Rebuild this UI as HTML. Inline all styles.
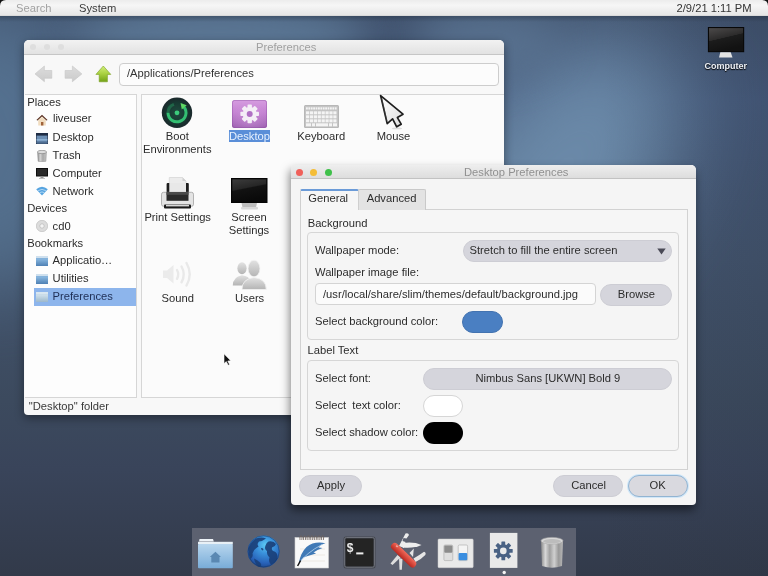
<!DOCTYPE html>
<html><head><meta charset="utf-8">
<style>
*{margin:0;padding:0;box-sizing:border-box}
html,body{width:768px;height:576px;overflow:hidden}
body{font-family:"Liberation Sans",sans-serif;font-size:11.2px;color:#2c2c2c;position:relative;
background:#3b4a5e}
#root{position:absolute;left:0;top:0;width:768px;height:576px;overflow:hidden;filter:blur(0.4px)}
.abs{position:absolute}
.t{position:absolute;white-space:nowrap;line-height:1}
#bg{position:absolute;left:0;top:0;width:768px;height:576px;overflow:hidden;
background:linear-gradient(180deg,#3f506a 0px,#45597a 100px,#42536c 260px,#3c4a5e 400px,#39445a 470px,#323a4a 576px);}
.blob{position:absolute;border-radius:50%}
#menubar{position:absolute;left:0;top:0;width:768px;height:16px;background:linear-gradient(#ececec,#f6f6f6 35%,#e6e6e6);border-bottom:1px solid #dadada}
/* preferences window */
#win{position:absolute;left:24px;top:40px;width:480px;height:375px;background:#f8f8f8;border-radius:5px 5px 4px 4px;overflow:hidden;box-shadow:0 3px 10px rgba(0,0,0,0.4)}
#win .title{position:absolute;left:0;top:0;width:480px;height:15px;background:linear-gradient(#f2f2f2,#e2e2e2);border-bottom:1px solid #c6c6c6}
.gdot{position:absolute;width:6px;height:6px;border-radius:50%;background:#dedede;top:4px}
#addr{position:absolute;left:95px;top:23px;width:380px;height:23px;border:1px solid #cdcdcd;border-radius:4px;background:#fcfcfc}
#side{position:absolute;left:1px;top:54px;width:112px;height:304px;background:#fdfdfd;border-top:1px solid #d6d6d6;border-right:1px solid #d6d6d6;border-bottom:1px solid #d6d6d6}
#main{position:absolute;left:117px;top:54px;width:363px;height:304px;background:#fbfbfb;border-top:1px solid #d6d6d6;border-left:1px solid #d6d6d6;border-bottom:1px solid #d6d6d6}
/* dialog */
#dlg{position:absolute;left:291px;top:165px;width:405px;height:340px;background:#f5f5f5;border-radius:2px 5px 4px 4px;overflow:hidden;box-shadow:-1px 5px 10px rgba(0,0,0,0.5)}
#dlg .title{position:absolute;left:0;top:0;width:405px;height:14px;background:linear-gradient(#eeeeee,#dddddd);border-bottom:1px solid #c2c2c2}
.cdot{position:absolute;width:7px;height:7px;border-radius:50%;top:3.5px}
.btn{position:absolute;background:#d4d4da;border-radius:11px;text-align:center;color:#333}
.frame{position:absolute;border:1px solid #d6d6d6;border-radius:4px}
/* dock */
#dlgc .t{margin-top:-0.8px;margin-left:0.5px}
#sidec .t{margin-left:0.6px}
#dock{position:absolute;left:192px;top:528px;width:384px;height:48px;background:#5c6170}
</style></head>
<body><div id="root">
<div id="bg">
<div class="blob" style="left:390px;top:85px;width:330px;height:190px;background:#7090af;filter:blur(45px);transform:rotate(-52deg);opacity:0.9"></div>
<div class="blob" style="left:-130px;top:0px;width:230px;height:290px;background:#587694;filter:blur(40px);opacity:0.8"></div>
<div class="blob" style="left:70px;top:0px;width:300px;height:80px;background:#5e7b99;filter:blur(22px);opacity:0.9"></div><div class="blob" style="left:410px;top:5px;width:150px;height:70px;background:#5b7593;filter:blur(22px);opacity:0.85"></div><div class="abs" style="left:0;top:16px;width:768px;height:6px;background:linear-gradient(rgba(30,40,55,0.35),rgba(30,40,55,0))"></div>
<div class="abs" style="left:600px;top:0;width:168px;height:576px;background:linear-gradient(90deg,rgba(30,38,52,0),rgba(30,38,52,0.12))"></div>
</div>
<div id="menubar">
<svg class="abs" style="left:0;top:0" width="6" height="6"><path d="M0 0 H6 Q0 0 0 6 Z" fill="#111"/></svg><svg class="abs" style="left:762px;top:0" width="6" height="6"><path d="M6 0 H0 Q6 0 6 6 Z" fill="#111"/></svg>
  <div class="t" style="left:16px;top:2.5px;color:#a2a2a2">Search</div>
  <div class="t" style="left:79px;top:2.5px;color:#3a3a3a">System</div>
  <div class="t" style="left:676.5px;top:2.5px;color:#333">2/9/21 1:11 PM</div>
</div>

<!-- Desktop icon Computer -->
<svg class="abs" style="left:707px;top:26px" width="38" height="32" viewBox="707 26 38 32">
<defs><linearGradient id="dcg" x1="0" y1="0" x2="0.35" y2="1"><stop offset="0" stop-color="#4c4a4a"/><stop offset="0.5" stop-color="#2c2b2b"/><stop offset="0.52" stop-color="#1c1c1c"/><stop offset="1" stop-color="#121212"/></linearGradient></defs>
<rect x="707.9" y="27" width="36.3" height="25.2" fill="#080808"/>
<rect x="709" y="28.1" width="34.1" height="23" fill="url(#dcg)"/>
<path d="M720.3 52.2 L730.7 52.2 L732.5 57.6 L719 57.6 Z" fill="#e2e2e2"/>
</svg>
<div class="t" style="left:704.6px;top:61.5px;font-size:9px;font-weight:bold;color:#eef2f8;text-shadow:0 1px 1px #000,0 0 2px rgba(0,0,0,0.6)">Computer</div>
<div id="win">
  <div class="title">
    <div class="gdot" style="left:5.5px"></div>
    <div class="gdot" style="left:20px"></div>
    <div class="gdot" style="left:34px"></div>
    <div class="t" style="left:232px;top:2px;color:#a0a0a0">Preferences</div>
  </div>
  <div id="addr"><div class="t" style="left:7px;top:4px;color:#333">/Applications/Preferences</div></div>
  <div id="side"></div>
  <div id="main"></div>
  <div class="t" style="left:4.8px;top:361px;color:#3a3a3a">"Desktop" folder</div>
</div>

<svg class="abs" style="left:30px;top:60px" width="85" height="28" viewBox="30 60 85 28">
<defs><linearGradient id="upg" x1="0" y1="0" x2="0" y2="1"><stop offset="0" stop-color="#d2ef7a"/><stop offset="0.5" stop-color="#a8d040"/><stop offset="1" stop-color="#72a216"/></linearGradient>
<linearGradient id="grg" x1="0" y1="0" x2="0" y2="1"><stop offset="0" stop-color="#dcdcdc"/><stop offset="1" stop-color="#cbcbcb"/></linearGradient></defs>
<path d="M35 73.9 L44.4 66 L44.4 70.5 L51.8 70.5 L51.8 78.3 L44.4 78.3 L44.4 81.7 Z" fill="url(#grg)" stroke="#c6c6c6" stroke-width="0.6"/>
<path d="M81.9 73.9 L72.4 66 L72.4 70.5 L65.1 70.5 L65.1 78.3 L72.4 78.3 L72.4 81.7 Z" fill="url(#grg)" stroke="#c6c6c6" stroke-width="0.6"/>
<path d="M103.3 66 L110.8 74.4 L107.4 74.4 L107.4 81.8 L99.2 81.8 L99.2 74.4 L95.9 74.4 Z" fill="url(#upg)" stroke="#78a020" stroke-width="0.6"/>
</svg>
<div id="sidec">
<div class="abs" style="left:34px;top:288px;width:102px;height:17.5px;background:#8db5ec"></div>
<svg width="0" height="0" style="position:absolute"><defs><linearGradient id="fg0" x1="0" y1="0" x2="0" y2="1"><stop offset="0" stop-color="#8fbde4"/><stop offset="1" stop-color="#4e80b4"/></linearGradient><linearGradient id="fg1" x1="0" y1="0" x2="0" y2="1"><stop offset="0" stop-color="#d4e4ee"/><stop offset="1" stop-color="#9cb8cc"/></linearGradient></defs></svg>
<div class="t" style="left:26.6px;top:96.6px;">Places</div>
<svg class="abs" style="left:36px;top:114px" width="12" height="12" viewBox="0 0 12 12"><path d="M6 0.8 L11.6 6 L10.2 6.4 L6 2.6 L1.8 6.4 L0.4 6 Z" fill="#5b3324"/><path d="M2.2 6 L6 2.8 L9.8 6 L9.8 11.5 L2.2 11.5 Z" fill="#f0dcc0"/><rect x="5" y="8" width="2.4" height="3.5" fill="#a0623a"/></svg><div class="t" style="left:52.3px;top:113.3px;">liveuser</div>
<svg class="abs" style="left:36px;top:132.5px" width="12" height="11" viewBox="0 0 12 11"><rect x="0" y="0" width="12" height="11" fill="#1f2c44"/><rect x="0.6" y="2.6" width="10.8" height="7.8" fill="#6d8fb4"/><rect x="0.6" y="6" width="10.8" height="1.6" fill="#8cb0d2"/><rect x="0.6" y="8.5" width="10.8" height="1.9" fill="#4f6e92"/></svg><div class="t" style="left:52px;top:132px;">Desktop</div>
<svg class="abs" style="left:37px;top:150px" width="10" height="12" viewBox="0 0 10 12"><defs><linearGradient id="stg" x1="0" y1="0" x2="1" y2="0"><stop offset="0" stop-color="#8c8c8c"/><stop offset="0.3" stop-color="#d4d4d4"/><stop offset="0.6" stop-color="#a8a8a8"/><stop offset="1" stop-color="#c8c8c8"/></linearGradient></defs><path d="M0.6 2.2 L9.4 2.2 L8.9 11.3 Q5 12.2 1.1 11.3 Z" fill="url(#stg)" stroke="#8a8a8a" stroke-width="0.5"/><ellipse cx="5" cy="2" rx="4.6" ry="1.7" fill="#dcdcdc" stroke="#7a7a7a" stroke-width="0.6"/></svg><div class="t" style="left:52px;top:149.5px;">Trash</div>
<svg class="abs" style="left:36px;top:168px" width="12" height="11" viewBox="0 0 12 11"><rect x="0" y="0" width="12" height="8.5" fill="#0e0e0e"/><rect x="1" y="1" width="10" height="6.5" fill="#2a2a2a"/><rect x="4.5" y="8.5" width="3" height="1.5" fill="#9a9a9a"/><rect x="3" y="10" width="6" height="1" fill="#c0c0c0"/></svg><div class="t" style="left:52px;top:167.7px;">Computer</div>
<svg class="abs" style="left:36px;top:186px" width="12" height="10" viewBox="0 0 12 10"><path d="M0.2 3.2 Q6 -1.8 11.8 3.2 L6 9.6 Z" fill="#56a4e0"/><path d="M2.2 4.6 Q6 2.2 9.8 4.6" stroke="#d8ecfa" stroke-width="0.7" fill="none"/><path d="M3.8 6.6 Q6 5.3 8.2 6.6" stroke="#d8ecfa" stroke-width="0.7" fill="none"/></svg><div class="t" style="left:52px;top:186px;">Network</div>
<div class="t" style="left:26.6px;top:203.2px;">Devices</div>
<svg class="abs" style="left:36px;top:220px" width="12" height="12" viewBox="0 0 12 12"><circle cx="6" cy="6" r="5.7" fill="#dcdcdc" stroke="#b8b8b8" stroke-width="0.6"/><circle cx="6" cy="6" r="2.2" fill="#f4f4f4" stroke="#b0b0b0" stroke-width="0.6"/></svg><div class="t" style="left:52px;top:220.7px;">cd0</div>
<div class="t" style="left:26.6px;top:237.9px;">Bookmarks</div>
<svg class="abs" style="left:36px;top:256px" width="12" height="10" viewBox="0 0 12 10"><rect x="0" y="0" width="12" height="10" fill="#4a7fb6"/><rect x="0" y="0" width="12" height="2.2" fill="#cfe0ee"/><rect x="0" y="2.2" width="12" height="7.8" fill="url(#fg0)"/></svg><div class="t" style="left:52px;top:255px;">Applicatio…</div>
<svg class="abs" style="left:36px;top:273.8px" width="12" height="10" viewBox="0 0 12 10"><rect x="0" y="0" width="12" height="10" fill="#4a7fb6"/><rect x="0" y="0" width="12" height="2.2" fill="#cfe0ee"/><rect x="0" y="2.2" width="12" height="7.8" fill="url(#fg0)"/></svg><div class="t" style="left:52px;top:272.8px;">Utilities</div>
<svg class="abs" style="left:36px;top:291.5px" width="12" height="10" viewBox="0 0 12 10"><rect x="0" y="0" width="12" height="10" fill="#a0bcd0"/><rect x="0" y="0" width="12" height="2.2" fill="#d8e6f0"/><rect x="0" y="2.2" width="12" height="7.8" fill="url(#fg1)"/></svg><div class="t" style="left:52px;top:290.5px;color:#1f2f55">Preferences</div>
</div>
<div id="mainc">
<svg class="abs" style="left:161px;top:96.5px" width="32" height="32" viewBox="0 0 32 32">
<defs><radialGradient id="bootg" cx="0.5" cy="0.5" r="0.5"><stop offset="0" stop-color="#1f4a3e"/><stop offset="0.7" stop-color="#173a32"/><stop offset="1" stop-color="#1a2a2c"/></radialGradient></defs>
<circle cx="16" cy="15.8" r="15.2" fill="#1c2c2e"/><circle cx="16" cy="15.8" r="14.2" fill="url(#bootg)"/>
<path d="M7.00 15.80 A9.0 9.0 0 0 1 12.92 7.34" fill="none" stroke="#2a9a62" stroke-width="3" opacity="0.45"/>
<path d="M22.89 10.01 A9.0 9.0 0 1 1 7.00 15.80" fill="none" stroke="#33bf72" stroke-width="3"/>
<path d="M19.55 6.03 L25.67 8.34 L20.76 12.45 Z" fill="#5fd864"/>
<circle cx="16" cy="15.8" r="2.4" fill="#3ccb7c"/></svg>
<div class="t" style="left:137.3px;top:131.3px;width:80px;text-align:center;">Boot</div>
<div class="t" style="left:137.3px;top:143.5px;width:80px;text-align:center;">Environments</div>
<svg class="abs" style="left:232px;top:99.7px" width="35" height="28" viewBox="0 0 35 28">
<defs><linearGradient id="purg" x1="0" y1="0" x2="0" y2="1"><stop offset="0" stop-color="#d69ce0"/><stop offset="0.45" stop-color="#c482d2"/><stop offset="1" stop-color="#9a5cae"/></linearGradient>
<radialGradient id="purr" cx="0.5" cy="0.75" r="0.6"><stop offset="0" stop-color="#e0b0e8" stop-opacity="0.35"/><stop offset="1" stop-color="#e0b0e8" stop-opacity="0"/></radialGradient></defs>
<rect x="0" y="0" width="35" height="28" rx="2.5" fill="url(#purg)"/><rect x="0" y="0" width="35" height="28" rx="2.5" fill="url(#purr)"/>
<rect x="0.4" y="0.4" width="34.2" height="27.2" rx="2.3" fill="none" stroke="#8a4c9e" stroke-width="0.8" opacity="0.55"/>
<g transform="translate(17.7 13.9)" fill="#f4eef6">
<circle r="7"/>
<rect x="-2.2" y="-9.3" width="4.4" height="18.6" rx="0.8"/>
<rect x="-2.2" y="-9.3" width="4.4" height="18.6" rx="0.8" transform="rotate(45)"/>
<rect x="-2.2" y="-9.3" width="4.4" height="18.6" rx="0.8" transform="rotate(90)"/>
<rect x="-2.2" y="-9.3" width="4.4" height="18.6" rx="0.8" transform="rotate(135)"/>
<circle r="3" fill="#b070c4"/></g></svg>
<div class="abs" style="left:229.2px;top:130.2px;width:40.6px;height:12px;background:#5a8ed8"></div>
<div class="t" style="left:209.5px;top:130.8px;width:80px;text-align:center;color:#e6f0fe">Desktop</div>
<svg class="abs" style="left:303.5px;top:105.3px" width="35" height="23" viewBox="0 0 35 23"><rect x="0" y="0" width="35" height="23" rx="1.5" fill="#b4b4b4"/><rect x="0.8" y="0.8" width="33.4" height="21.4" rx="1" fill="#c4c4c4"/><rect x="2.0" y="2.3" width="1.8" height="2.2" fill="#f4f4f4"/><rect x="4.4" y="2.3" width="1.8" height="2.2" fill="#f4f4f4"/><rect x="6.8" y="2.3" width="1.8" height="2.2" fill="#f4f4f4"/><rect x="9.2" y="2.3" width="1.8" height="2.2" fill="#f4f4f4"/><rect x="11.6" y="2.3" width="1.8" height="2.2" fill="#f4f4f4"/><rect x="14.0" y="2.3" width="1.8" height="2.2" fill="#f4f4f4"/><rect x="16.4" y="2.3" width="1.8" height="2.2" fill="#f4f4f4"/><rect x="18.8" y="2.3" width="1.8" height="2.2" fill="#f4f4f4"/><rect x="21.2" y="2.3" width="1.8" height="2.2" fill="#f4f4f4"/><rect x="23.6" y="2.3" width="1.8" height="2.2" fill="#f4f4f4"/><rect x="26.0" y="2.3" width="1.8" height="2.2" fill="#f4f4f4"/><rect x="28.4" y="2.3" width="1.8" height="2.2" fill="#f4f4f4"/><rect x="30.8" y="2.3" width="1.8" height="2.2" fill="#f4f4f4"/><rect x="2.0" y="6.3" width="3.2" height="3" fill="#f4f4f4"/><rect x="5.9" y="6.3" width="3.2" height="3" fill="#f4f4f4"/><rect x="9.8" y="6.3" width="3.2" height="3" fill="#f4f4f4"/><rect x="13.7" y="6.3" width="3.2" height="3" fill="#f4f4f4"/><rect x="17.6" y="6.3" width="3.2" height="3" fill="#f4f4f4"/><rect x="21.5" y="6.3" width="3.2" height="3" fill="#f4f4f4"/><rect x="25.4" y="6.3" width="3.2" height="3" fill="#f4f4f4"/><rect x="29.3" y="6.3" width="3.2" height="3" fill="#f4f4f4"/><rect x="2.0" y="10.3" width="3.2" height="3" fill="#f4f4f4"/><rect x="5.9" y="10.3" width="3.2" height="3" fill="#f4f4f4"/><rect x="9.8" y="10.3" width="3.2" height="3" fill="#f4f4f4"/><rect x="13.7" y="10.3" width="3.2" height="3" fill="#f4f4f4"/><rect x="17.6" y="10.3" width="3.2" height="3" fill="#f4f4f4"/><rect x="21.5" y="10.3" width="3.2" height="3" fill="#f4f4f4"/><rect x="25.4" y="10.3" width="3.2" height="3" fill="#f4f4f4"/><rect x="29.3" y="10.3" width="3.2" height="3" fill="#f4f4f4"/><rect x="2.0" y="14.3" width="3.2" height="3" fill="#f4f4f4"/><rect x="5.9" y="14.3" width="3.2" height="3" fill="#f4f4f4"/><rect x="9.8" y="14.3" width="3.2" height="3" fill="#f4f4f4"/><rect x="13.7" y="14.3" width="3.2" height="3" fill="#f4f4f4"/><rect x="17.6" y="14.3" width="3.2" height="3" fill="#f4f4f4"/><rect x="21.5" y="14.3" width="3.2" height="3" fill="#f4f4f4"/><rect x="25.4" y="14.3" width="3.2" height="3" fill="#f4f4f4"/><rect x="29.3" y="14.3" width="3.2" height="3" fill="#f4f4f4"/><rect x="2" y="18.3" width="5" height="3" fill="#f4f4f4"/><rect x="8" y="18.3" width="3" height="3" fill="#f4f4f4"/><rect x="12" y="18.3" width="12" height="3" fill="#f4f4f4"/><rect x="25" y="18.3" width="3" height="3" fill="#f4f4f4"/><rect x="29" y="18.3" width="4" height="3" fill="#f4f4f4"/></svg>
<div class="t" style="left:281.2px;top:131px;width:80px;text-align:center;">Keyboard</div>
<svg class="abs" style="left:376px;top:92px" width="32" height="38" viewBox="376 92 32 38">
<defs><linearGradient id="curg" x1="0" y1="0" x2="1" y2="1"><stop offset="0" stop-color="#ffffff"/><stop offset="1" stop-color="#dedede"/></linearGradient></defs>
<path d="M380.6 95.6 L387.2 123.6 L392.6 118.9 L396.7 126.8 L401.2 124.2 L397.4 117.6 L403 114.2 Z" fill="url(#curg)" stroke="#1e1e1e" stroke-width="1.7" stroke-linejoin="round"/>
<path d="M381.6 98 L386.8 121" stroke="#3a3a3a" stroke-width="1.2" opacity="0.6"/>
<ellipse cx="397" cy="128.4" rx="5" ry="0.9" fill="#000" opacity="0.12"/></svg>
<div class="t" style="left:353.5px;top:131px;width:80px;text-align:center;">Mouse</div>
<svg class="abs" style="left:161px;top:177px" width="33" height="32" viewBox="0 0 33 32">
<path d="M8.3 0.5 L21.5 0.5 L25 4 L25 16 L8.3 16 Z" fill="#ececec" stroke="#cfcfcf" stroke-width="0.6"/>
<path d="M21.5 0.5 L21.5 4 L25 4 Z" fill="#d0d0d0"/>
<rect x="5.6" y="6" width="22.2" height="18" rx="1" fill="#1e1e1e"/>
<rect x="8.3" y="6" width="16.7" height="9" fill="#e8e8e8"/>
<rect x="0.5" y="15.3" width="32" height="14" rx="2" fill="#e4e4e4" stroke="#9a9a9a" stroke-width="0.7"/>
<rect x="5.5" y="15.3" width="22" height="8.5" fill="#2a2a2a"/>
<rect x="5.5" y="15.3" width="22" height="2.5" fill="#4a4a4a"/>
<rect x="3" y="27.5" width="27" height="4" rx="1" fill="#1a1a1a"/>
<rect x="5" y="27.8" width="23" height="1.6" fill="#d8d8d8"/></svg>
<div class="t" style="left:137.7px;top:212px;width:80px;text-align:center;">Print Settings</div>
<svg class="abs" style="left:230.7px;top:177.8px" width="37" height="32" viewBox="0 0 37 32">
<defs><linearGradient id="scrg" x1="0" y1="0" x2="0.3" y2="1"><stop offset="0" stop-color="#3c3c3c"/><stop offset="0.45" stop-color="#262626"/><stop offset="0.5" stop-color="#121212"/><stop offset="1" stop-color="#0a0a0a"/></linearGradient></defs>
<rect x="0" y="0" width="36.5" height="25" fill="#050505"/>
<rect x="1.3" y="1.3" width="33.9" height="22.4" fill="url(#scrg)"/>
<path d="M10.5 25 L26 25 L25 29.5 L11.5 29.5 Z" fill="#bdbdbd"/>
<rect x="10" y="29" width="17" height="2.4" rx="1" fill="#d9d9d9"/></svg>
<div class="t" style="left:209px;top:212px;width:80px;text-align:center;">Screen</div>
<div class="t" style="left:209px;top:224.5px;width:80px;text-align:center;">Settings</div>
<svg class="abs" style="left:162px;top:261px" width="32" height="27" viewBox="0 0 32 27">
<g fill="#ebebeb"><path d="M1 9.5 L5 9.5 L11.5 4 L11.5 22.5 L5 17 L1 17 Z"/></g>
<g fill="none" stroke="#e9e9e9" stroke-width="2.4" stroke-linecap="round"><path d="M15 9 Q17.5 13.3 15 17.8"/><path d="M19.5 5.5 Q24 13.3 19.5 21.3"/><path d="M24.5 2 Q31 13.3 24.5 24.5"/></g></svg>
<div class="t" style="left:137.7px;top:293px;width:80px;text-align:center;">Sound</div>
<svg class="abs" style="left:232px;top:259px" width="35" height="31" viewBox="0 0 35 31">
<defs><linearGradient id="usg" x1="0" y1="0" x2="0" y2="1"><stop offset="0" stop-color="#e2e2e2"/><stop offset="1" stop-color="#b4b4b4"/></linearGradient></defs>
<ellipse cx="10" cy="9.3" rx="4.6" ry="6" fill="url(#usg)"/>
<path d="M0.8 26.5 Q1 17.5 10 16.2 Q17 17 18.5 22 L18 26.5 Z" fill="url(#usg)"/>
<ellipse cx="22" cy="9.5" rx="6" ry="8.3" fill="url(#usg)" stroke="#f4f4f4" stroke-width="0.8"/>
<path d="M10 30.5 Q9.8 20 22 18.5 Q34.5 20 34.2 30.5 Z" fill="url(#usg)" stroke="#f2f2f2" stroke-width="0.8"/></svg>
<div class="t" style="left:209.6px;top:293px;width:80px;text-align:center;">Users</div>
<svg class="abs" style="left:223px;top:353px" width="9" height="13" viewBox="0 0 9 13"><path d="M1 0.8 L1 10.6 L3.3 8.6 L5.2 12.3 L6.6 11.6 L4.8 8 L7.8 7.8 Z" fill="#111" stroke="#fff" stroke-width="0.6"/></svg>
</div>
<div id="dlg">
  <div class="title">
    <div class="cdot" style="left:5px;background:#f0605a"></div>
    <div class="cdot" style="left:19px;background:#f4bd37"></div>
    <div class="cdot" style="left:33.5px;background:#3fc04a"></div>
    <div class="t" style="left:173px;top:2px;color:#909090">Desktop Preferences</div>
  </div>
</div>

<div id="dlgc">
<div class="abs" style="left:299.5px;top:209px;width:388.2px;height:260.5px;border:1px solid #d2d2d2;background:#f6f6f6"></div>
<div class="abs" style="left:357.5px;top:188.5px;width:68.3px;height:21.5px;border:1px solid #c9c9c9;border-bottom:none;background:#e3e3e3;border-radius:2px 2px 0 0"></div>
<div class="abs" style="left:299.5px;top:188.6px;width:59.0px;height:21.6px;border:1px solid #cfcfcf;border-top:2px solid #6b9bd8;border-bottom:none;background:#f6f6f6;border-radius:2px 2px 0 0"></div>
<div class="t" style="left:307.8px;top:193.8px;">General</div>
<div class="t" style="left:366.2px;top:193.8px;">Advanced</div>
<div class="t" style="left:307.2px;top:218.4px;">Background</div>
<div class="abs" style="left:307.3px;top:232.4px;width:371.7px;height:107.8px;border:1px solid #d6d6d6;border-radius:4px;background:#f5f5f5"></div>
<div class="t" style="left:314.5px;top:246px;">Wallpaper mode:</div>
<div class="abs" style="left:463px;top:240.2px;width:209.0px;height:22.2px;background:#d5d5dc;border:1px solid #cdcdd4;border-radius:11px"></div>
<div class="t" style="left:469px;top:245.5px;">Stretch to fill the entire screen</div>
<svg class="abs" style="left:656.5px;top:248px" width="9" height="7" viewBox="0 0 9 7"><path d="M0.3 0.5 L8.7 0.5 L4.5 6.5 Z" fill="#4a4a56"/></svg>
<div class="t" style="left:314.5px;top:267.8px;">Wallpaper image file:</div>
<div class="abs" style="left:315.2px;top:283.3px;width:280.4px;height:22.1px;background:#fbfbfb;border:1px solid #d4d4d4;border-radius:4px"></div>
<div class="t" style="left:322.5px;top:289.8px;">/usr/local/share/slim/themes/default/background.jpg</div>
<div class="abs" style="left:599.8px;top:283.5px;width:72.2px;height:22.3px;background:#d5d5dc;border:1px solid #cdcdd4;border-radius:11px"></div>
<div class="t" style="left:599.8px;top:289.6px;width:72.2px;text-align:center">Browse</div>
<div class="t" style="left:314.5px;top:316.5px;">Select background color:</div>
<div class="abs" style="left:462.4px;top:310.6px;width:40.6px;height:22.0px;background:#4a7fc2;border:1px solid #4373b0;border-radius:11px"></div>
<div class="t" style="left:307px;top:345.5px;">Label Text</div>
<div class="abs" style="left:307.3px;top:360.4px;width:371.7px;height:90.6px;border:1px solid #d6d6d6;border-radius:4px;background:#f5f5f5"></div>
<div class="t" style="left:314.5px;top:373.8px;">Select font:</div>
<div class="abs" style="left:422.8px;top:367.5px;width:249.2px;height:22.3px;background:#d5d5dc;border:1px solid #cdcdd4;border-radius:11px"></div>
<div class="t" style="left:422.8px;top:373.8px;width:249.2px;text-align:center">Nimbus Sans [UKWN] Bold 9</div>
<div class="t" style="left:314.5px;top:401px;">Select&nbsp; text color:</div>
<div class="abs" style="left:423.3px;top:394.9px;width:39.9px;height:21.7px;background:#ffffff;border:1px solid #d6d6d6;border-radius:11px"></div>
<div class="t" style="left:314.5px;top:428px;">Select shadow color:</div>
<div class="abs" style="left:423.3px;top:421.7px;width:39.9px;height:22.3px;background:#000;border-radius:11px"></div>
<div class="abs" style="left:299.1px;top:474.9px;width:62.9px;height:21.8px;background:#d5d5dc;border:1px solid #cdcdd4;border-radius:11px"></div>
<div class="t" style="left:299.1px;top:480.6px;width:62.9px;text-align:center">Apply</div>
<div class="abs" style="left:553.1px;top:474.9px;width:69.9px;height:21.8px;background:#d5d5dc;border:1px solid #cdcdd4;border-radius:11px"></div>
<div class="t" style="left:553.1px;top:480.6px;width:69.9px;text-align:center">Cancel</div>
<div class="abs" style="left:627.8px;top:474.8px;width:60.2px;height:21.9px;background:#d9d9df;border:1px solid #92b4d2;border-radius:11px;box-shadow:0 0 0 1px rgba(205,230,248,0.9)"></div>
<div class="t" style="left:627.1px;top:480.6px;width:60.2px;text-align:center">OK</div>
</div>
<div id="dock"></div>
<svg class="abs" style="left:192px;top:528px" width="384" height="48" viewBox="192 528 384 48">
<defs>
<linearGradient id="fold" x1="0" y1="0" x2="0" y2="1"><stop offset="0" stop-color="#b8d6ee"/><stop offset="1" stop-color="#78acd8"/></linearGradient>
<radialGradient id="glob" cx="0.55" cy="0.3" r="0.75"><stop offset="0" stop-color="#5cc8f4"/><stop offset="0.35" stop-color="#3a92dc"/><stop offset="0.75" stop-color="#2862b8"/><stop offset="1" stop-color="#1a4488"/></radialGradient>
<linearGradient id="trg" x1="0" y1="0" x2="1" y2="0"><stop offset="0" stop-color="#8a8a8a"/><stop offset="0.2" stop-color="#d8d8d8"/><stop offset="0.4" stop-color="#a0a0a0"/><stop offset="0.6" stop-color="#d0d0d0"/><stop offset="0.8" stop-color="#9a9a9a"/><stop offset="1" stop-color="#b8b8b8"/></linearGradient>
<linearGradient id="redg2" x1="0" y1="0" x2="0" y2="1"><stop offset="0" stop-color="#f26a5a"/><stop offset="1" stop-color="#b82820"/></linearGradient><linearGradient id="redg" x1="0" y1="0" x2="1" y2="0"><stop offset="0" stop-color="#f06050"/><stop offset="1" stop-color="#c02820"/></linearGradient>
</defs>
<!-- home folder -->
<path d="M199 541.5 L199.5 539 L213 539 L213.8 541.5 Z" fill="#eef3f8"/>
<rect x="198" y="541.8" width="34.8" height="2.6" fill="#e8f0f6"/>
<rect x="198" y="544" width="34.8" height="24.3" rx="1" fill="url(#fold)"/>
<path d="M215.4 551.8 L221 557 L219.5 557 L219.5 562.5 L211.3 562.5 L211.3 557 L209.8 557 Z" fill="#5a88b2"/>
<!-- globe -->
<circle cx="263.6" cy="551.4" r="16" fill="url(#glob)"/>
<g fill="#1a3f78" opacity="0.9">
<path d="M256 538.5 Q262 536.5 266 538.5 Q263 541 259 541.5 Q256.5 544 258.5 546.5 Q254 549 252.5 553.5 Q253.5 557.5 250.5 559 Q248 554 248.5 548 Q251 541.5 256 538.5 Z"/>
<path d="M268.5 541.5 Q273.5 540.5 276 544 Q275 547 272 547.5 Q271 550.5 274.5 551.5 Q278 553 277.5 558.5 Q275 563 271 564.5 Q268 561.5 269.5 557.5 Q266.5 554.5 267 551 Q264 549 265.5 545.5 Q266.5 542.5 268.5 541.5 Z"/>
<path d="M254 558.5 Q258 560 260.5 563 Q262.5 566.5 259 567 Q255 564.5 254 558.5 Z"/>
<path d="M261 548 Q263.5 547.5 263.5 550 Q261.5 551.5 261 548 Z"/>
</g>
<circle cx="263.6" cy="551.4" r="15.6" fill="none" stroke="#13305a" stroke-width="0.8" opacity="0.6"/>
<!-- notepad -->
<rect x="295" y="537.5" width="33.5" height="30.5" fill="#f9f9f9"/>
<rect x="295" y="537.5" width="33.5" height="30.5" fill="none" stroke="#d0d0d0" stroke-width="0.6"/>
<g stroke="#e4ddd4" stroke-width="0.6"><path d="M300 549 H325"/><path d="M300 555 H325"/><path d="M300 561 H325"/></g>
<path d="M300.0 540 Q299.2 535.8 301.2 535.6 Q302.6 536 301.8 540" fill="none" stroke="#6e625c" stroke-width="0.8"/><path d="M303.6 540 Q302.8 535.8 304.8 535.6 Q306.2 536 305.4 540" fill="none" stroke="#6e625c" stroke-width="0.8"/><path d="M307.2 540 Q306.4 535.8 308.4 535.6 Q309.8 536 309.0 540" fill="none" stroke="#6e625c" stroke-width="0.8"/><path d="M310.8 540 Q310.0 535.8 312.0 535.6 Q313.4 536 312.6 540" fill="none" stroke="#6e625c" stroke-width="0.8"/><path d="M314.4 540 Q313.6 535.8 315.6 535.6 Q317.0 536 316.2 540" fill="none" stroke="#6e625c" stroke-width="0.8"/><path d="M318.0 540 Q317.2 535.8 319.2 535.6 Q320.6 536 319.8 540" fill="none" stroke="#6e625c" stroke-width="0.8"/><path d="M321.6 540 Q320.8 535.8 322.8 535.6 Q324.2 536 323.4 540" fill="none" stroke="#6e625c" stroke-width="0.8"/>
<path d="M298.8 563 Q300.5 553 306.5 547 Q314 541 325.5 543.2 Q320.5 544.5 318.5 547.5 Q321 547.5 322.5 548 Q316.5 550 313.5 552.5 Q315.5 553 316 553.5 Q309 555.5 303.5 557.5 Z" fill="#3f79b6"/>
<path d="M299 563.5 Q306 553 322 544.5" stroke="#c4dcf2" stroke-width="0.7" fill="none"/>
<path d="M297.6 566 L300.6 560.5" stroke="#111" stroke-width="1.5"/>
<!-- terminal -->
<rect x="343.5" y="536.4" width="32" height="32" rx="2.5" fill="#43464e"/>
<rect x="344.6" y="537.5" width="29.8" height="29.8" rx="1.8" fill="none" stroke="#6d7079" stroke-width="1"/>
<rect x="345.6" y="538.5" width="27.8" height="27.8" rx="1" fill="#242424"/>
<text x="346.8" y="552.3" font-family="Liberation Sans" font-weight="bold" font-size="12" fill="#ececec">$</text>
<rect x="356.2" y="552.4" width="7.2" height="2" fill="#ececec"/>
<!-- knife -->
<path d="M399 546 L405.5 533.5 Q408.5 532.5 409 535 L406.5 538.5 L403.5 538 L402.5 541 L405.5 542 L404 548 Z" fill="#ececec"/>
<path d="M403 543 Q414 541.5 421.5 545 Q414 548.5 403 547.5 Z" fill="#eeeeee"/>
<path d="M409.5 553 L413.8 548.5 L413 557 Z" fill="#e4e4e4"/>
<path d="M413.5 558.5 Q419 555.5 424 551.8 Q426.5 552.5 425.3 555 Q421 559.5 415.5 562 Z" fill="#e6e6e6"/>
<path d="M397.5 555 L390.5 563.5 L392.5 565 L400.5 557.5 Z" fill="#dedede"/>
<path d="M399 558 L399.5 569.8 L401.8 569.8 L402.5 559 Z" fill="#dedede"/>
<g transform="translate(403.6 555.2) rotate(44)"><rect x="-16" y="-3.6" width="32" height="7.2" rx="3.4" fill="url(#redg2)"/><rect x="-12" y="-2.6" width="2" height="1.6" fill="#f4c0b8" opacity="0.8"/></g>
<!-- switches -->
<rect x="438" y="539" width="35.2" height="28.7" rx="1" fill="#e9e9e9"/>
<rect x="438" y="539" width="35.2" height="28.7" rx="1" fill="none" stroke="#c8c8c8" stroke-width="0.5"/>
<rect x="443.9" y="545" width="8.9" height="15.6" rx="1.2" fill="#dedede" stroke="#a8a8a8" stroke-width="0.6"/>
<rect x="444.3" y="545.4" width="8.1" height="7.4" rx="1" fill="#8c8c8c"/>
<rect x="458.2" y="545" width="9.4" height="15.6" rx="1.2" fill="#f4f4f4" stroke="#a8a8a8" stroke-width="0.6"/>
<rect x="458.6" y="553" width="8.6" height="7.2" rx="1" fill="#3a8ee0"/>
<!-- settings -->
<rect x="489.9" y="532.9" width="27.5" height="35" fill="#e9e9e9"/>
<g transform="translate(503.3 550.9)" fill="#4a6284">
<circle r="6.6"/>
<rect x="-1.9" y="-9.4" width="3.8" height="18.8" rx="0.6"/>
<rect x="-1.9" y="-9.4" width="3.8" height="18.8" rx="0.6" transform="rotate(45)"/>
<rect x="-1.9" y="-9.4" width="3.8" height="18.8" rx="0.6" transform="rotate(90)"/>
<rect x="-1.9" y="-9.4" width="3.8" height="18.8" rx="0.6" transform="rotate(135)"/>
<circle r="3.3" fill="#eaeaea"/></g>
<circle cx="504.2" cy="572.5" r="1.7" fill="#f4f4f4"/>
<!-- trash -->
<path d="M541 541 L563 541 L562 566 Q552 569.5 542 566 Z" fill="url(#trg)"/>
<ellipse cx="552" cy="540.8" rx="11" ry="3.4" fill="#d8d8d8" stroke="#a8a8a8" stroke-width="0.6"/>
<ellipse cx="552" cy="541.3" rx="9" ry="2.2" fill="#bcbcbc"/>
</svg>
</div></body></html>
